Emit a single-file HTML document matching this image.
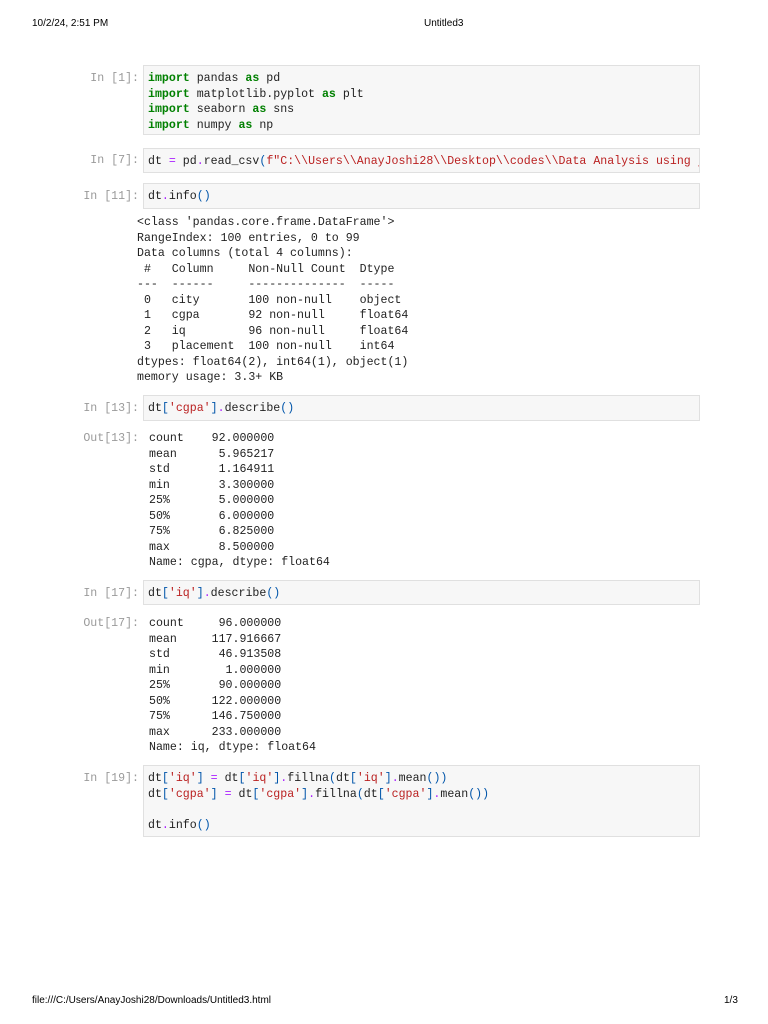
<!DOCTYPE html>
<html><head><meta charset="utf-8"><style>
body{margin:0;width:768px;height:1024px;background:#fff;position:relative;overflow:hidden;font-family:"Liberation Mono",monospace;}
.hdr{position:absolute;font-family:"Liberation Sans",sans-serif;font-size:10px;color:#000;}
.p{position:absolute;right:629px;font-size:11.6px;line-height:15.5px;color:#9a9a9a;white-space:pre;text-align:right;}
.box{position:absolute;left:143px;width:557px;background:#f7f7f7;border:1px solid #e0e0e0;box-sizing:border-box;overflow:hidden;}
pre{margin:0;font-family:"Liberation Mono",monospace;font-size:11.6px;line-height:15.5px;color:#222;white-space:pre;}
.box pre{padding:5px 4px 0 4px;}
.o{position:absolute;}
.k{color:#008000;font-weight:bold}
.s{color:#ba2121}
.op{color:#aa22ff}
.b{color:#0055aa}
</style></head><body>
<div class="hdr" style="left:32px;top:18px">10/2/24, 2:51 PM</div>
<div class="hdr" style="left:424px;top:18px">Untitled3</div>

<div class="p" style="top:71px">In [1]:</div>
<div class="box" style="top:65px;height:70px"><pre><span class="k">import</span> pandas <span class="k">as</span> pd
<span class="k">import</span> matplotlib.pyplot <span class="k">as</span> plt
<span class="k">import</span> seaborn <span class="k">as</span> sns
<span class="k">import</span> numpy <span class="k">as</span> np</pre></div>

<div class="p" style="top:153px">In [7]:</div>
<div class="box" style="top:148px;height:25px"><pre>dt <span class="op">=</span> pd<span class="op">.</span>read_csv<span class="b">(</span><span class="s">f"C:\\Users\\AnayJoshi28\\Desktop\\codes\\Data Analysis using jupyter"</span></pre></div>

<div class="p" style="top:189px">In [11]:</div>
<div class="box" style="top:183px;height:26px"><pre>dt<span class="op">.</span>info<span class="b">()</span></pre></div>

<pre class="o" style="left:137px;top:215px">&lt;class 'pandas.core.frame.DataFrame'&gt;
RangeIndex: 100 entries, 0 to 99
Data columns (total 4 columns):
 #   Column     Non-Null Count  Dtype  
---  ------     --------------  -----  
 0   city       100 non-null    object 
 1   cgpa       92 non-null     float64
 2   iq         96 non-null     float64
 3   placement  100 non-null    int64  
dtypes: float64(2), int64(1), object(1)
memory usage: 3.3+ KB</pre>

<div class="p" style="top:401px">In [13]:</div>
<div class="box" style="top:395px;height:26px"><pre>dt<span class="b">[</span><span class="s">'cgpa'</span><span class="b">]</span><span class="op">.</span>describe<span class="b">()</span></pre></div>

<div class="p" style="top:431px">Out[13]:</div>
<pre class="o" style="left:149px;top:431px">count    92.000000
mean      5.965217
std       1.164911
min       3.300000
25%       5.000000
50%       6.000000
75%       6.825000
max       8.500000
Name: cgpa, dtype: float64</pre>

<div class="p" style="top:586px">In [17]:</div>
<div class="box" style="top:580px;height:25px"><pre>dt<span class="b">[</span><span class="s">'iq'</span><span class="b">]</span><span class="op">.</span>describe<span class="b">()</span></pre></div>

<div class="p" style="top:616px">Out[17]:</div>
<pre class="o" style="left:149px;top:616px">count     96.000000
mean     117.916667
std       46.913508
min        1.000000
25%       90.000000
50%      122.000000
75%      146.750000
max      233.000000
Name: iq, dtype: float64</pre>

<div class="p" style="top:771px">In [19]:</div>
<div class="box" style="top:765px;height:72px"><pre>dt<span class="b">[</span><span class="s">'iq'</span><span class="b">]</span> <span class="op">=</span> dt<span class="b">[</span><span class="s">'iq'</span><span class="b">]</span><span class="op">.</span>fillna<span class="b">(</span>dt<span class="b">[</span><span class="s">'iq'</span><span class="b">]</span><span class="op">.</span>mean<span class="b">())</span>
dt<span class="b">[</span><span class="s">'cgpa'</span><span class="b">]</span> <span class="op">=</span> dt<span class="b">[</span><span class="s">'cgpa'</span><span class="b">]</span><span class="op">.</span>fillna<span class="b">(</span>dt<span class="b">[</span><span class="s">'cgpa'</span><span class="b">]</span><span class="op">.</span>mean<span class="b">())</span>

dt<span class="op">.</span>info<span class="b">()</span></pre></div>

<div class="hdr" style="left:32px;top:995px">file:///C:/Users/AnayJoshi28/Downloads/Untitled3.html</div>
<div class="hdr" style="left:724px;top:995px">1/3</div>
</body></html>
